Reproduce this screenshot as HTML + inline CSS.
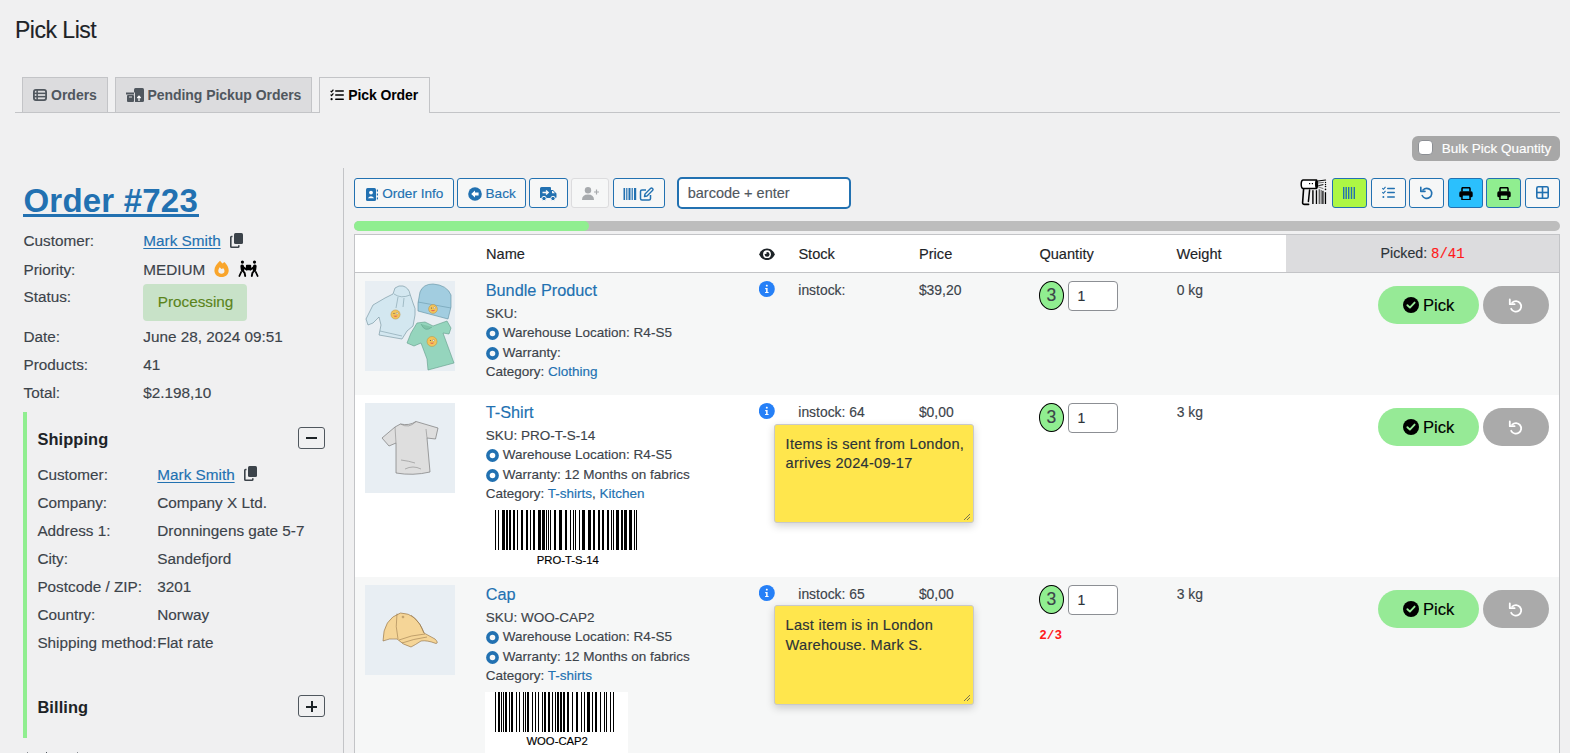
<!DOCTYPE html>
<html><head><meta charset="utf-8"><style>
html,body{margin:0;padding:0;}
body{width:1570px;height:753px;overflow:hidden;background:#f0f0f1;position:relative;font-family:"Liberation Sans",sans-serif;}
.t{position:absolute;line-height:1;white-space:nowrap;-webkit-text-stroke:0.15px currentColor;}
.r{position:absolute;}
</style></head><body>
<div class="t" style="left:15px;top:18.53px;font-size:23px;color:#1d2327;font-weight:400;font-family:'Liberation Sans',sans-serif;letter-spacing:-0.5px">Pick List</div><div class="r" style="left:15px;top:112px;width:1545px;height:1px;background:#c3c4c7"></div><div class="r" style="left:22px;top:77px;width:86px;height:35px;background:#dcdcde;border:1px solid #c3c4c7;border-bottom:none;box-sizing:border-box"></div><div class="r" style="left:115px;top:77px;width:197px;height:35px;background:#dcdcde;border:1px solid #c3c4c7;border-bottom:none;box-sizing:border-box"></div><div class="r" style="left:319px;top:77px;width:111px;height:36px;background:#f0f0f1;border:1px solid #c3c4c7;border-bottom:none;box-sizing:border-box"></div><div class="t" style="left:51px;top:88.15px;font-size:14px;color:#50575e;font-weight:700;font-family:'Liberation Sans',sans-serif;-webkit-text-stroke:0;">Orders</div><div class="t" style="left:147.5px;top:88.15px;font-size:14px;color:#50575e;font-weight:700;font-family:'Liberation Sans',sans-serif;-webkit-text-stroke:0;letter-spacing:-0.05px">Pending Pickup Orders</div><div class="t" style="left:348.3px;top:88.15px;font-size:14px;color:#000;font-weight:700;font-family:'Liberation Sans',sans-serif;-webkit-text-stroke:0;letter-spacing:-0.1px">Pick Order</div><svg class="r" style="left:33px;top:89px;" width="14" height="12" viewBox="0 0 14 12"><rect x="0.9" y="0.9" width="12.2" height="10.2" rx="2" fill="none" stroke="#50575e" stroke-width="1.8"/><rect x="1" y="3.6" width="12" height="1.5" fill="#50575e"/><rect x="1" y="6.9" width="12" height="1.5" fill="#50575e"/><rect x="3.4" y="1" width="1.5" height="10" fill="#50575e"/></svg><svg class="r" style="left:125.5px;top:88px;" width="18" height="14" viewBox="0 0 18 14"><rect x="8" y="0" width="10" height="14" rx="1.5" fill="#50575e"/><rect x="0" y="4.5" width="9" height="2" fill="#50575e"/><rect x="1" y="7" width="7" height="7" rx="1" fill="#50575e"/><rect x="3" y="8.5" width="3" height="1" fill="#dcdcde"/><path d="M13 13 V8.5 M11.3 10 L13 8.2 L14.7 10" stroke="#fff" stroke-width="1.2" fill="none"/><rect x="8" y="4.5" width="1" height="9.5" fill="#dcdcde"/></svg><svg class="r" style="left:330px;top:89px;" width="14" height="12" viewBox="0 0 14 12"><path d="M0.6 1.8 L1.6 2.8 L3.4 0.6 M0.6 5.6 L1.6 6.6 L3.4 4.4" stroke="#000" stroke-width="1.2" fill="none"/><circle cx="1.6" cy="10.2" r="1.1" fill="#000"/><rect x="5" y="1.2" width="9" height="1.6" rx="0.8" fill="#000"/><rect x="5" y="5.2" width="9" height="1.6" rx="0.8" fill="#000"/><rect x="5" y="9.4" width="9" height="1.6" rx="0.8" fill="#000"/></svg><div class="t" style="left:23.5px;top:184.07px;font-size:33px;color:#2271b1;font-weight:700;font-family:'Liberation Sans',sans-serif;-webkit-text-stroke:0;letter-spacing:0.2px">Order #723</div><div class="r" style="left:23px;top:214px;width:176px;height:3px;background:#2271b1"></div><div class="t" style="left:23.5px;top:233.25px;font-size:15.3px;color:#3c434a;font-weight:400;font-family:'Liberation Sans',sans-serif;">Customer:</div><div class="t" style="left:23.5px;top:261.75px;font-size:15.3px;color:#3c434a;font-weight:400;font-family:'Liberation Sans',sans-serif;">Priority:</div><div class="t" style="left:23.5px;top:289.05px;font-size:15.3px;color:#3c434a;font-weight:400;font-family:'Liberation Sans',sans-serif;">Status:</div><div class="t" style="left:23.5px;top:328.85px;font-size:15.3px;color:#3c434a;font-weight:400;font-family:'Liberation Sans',sans-serif;">Date:</div><div class="t" style="left:23.5px;top:357.35px;font-size:15.3px;color:#3c434a;font-weight:400;font-family:'Liberation Sans',sans-serif;">Products:</div><div class="t" style="left:23.5px;top:384.55px;font-size:15.3px;color:#3c434a;font-weight:400;font-family:'Liberation Sans',sans-serif;">Total:</div><div class="t" style="left:143.3px;top:233.25px;font-size:15.3px;color:#2271b1;font-weight:400;font-family:'Liberation Sans',sans-serif;"><span style="text-decoration:underline;text-underline-offset:2px">Mark Smith</span></div><div class="t" style="left:143.3px;top:261.75px;font-size:15.3px;color:#3c434a;font-weight:400;font-family:'Liberation Sans',sans-serif;">MEDIUM</div><div class="t" style="left:143.3px;top:328.85px;font-size:15.3px;color:#3c434a;font-weight:400;font-family:'Liberation Sans',sans-serif;">June 28, 2024 09:51</div><div class="t" style="left:143.3px;top:357.35px;font-size:15.3px;color:#3c434a;font-weight:400;font-family:'Liberation Sans',sans-serif;">41</div><div class="t" style="left:143.3px;top:384.55px;font-size:15.3px;color:#3c434a;font-weight:400;font-family:'Liberation Sans',sans-serif;">$2.198,10</div><div class="r" style="left:143px;top:284px;width:104px;height:37px;background:#c8e2c8;border-radius:4px"></div><div class="t" style="left:157.7px;top:294.05px;font-size:15.3px;color:#5b841b;font-weight:400;font-family:'Liberation Sans',sans-serif;">Processing</div><svg class="r" style="left:229.5px;top:233px;" width="13" height="15" viewBox="0 0 13 15"><rect x="4" y="0" width="9" height="11" rx="1.5" fill="#3c434a"/><path d="M2.5 3.5 H1.6 Q0.8 3.5 0.8 4.3 V13.5 Q0.8 14.2 1.6 14.2 H8 Q8.8 14.2 8.8 13.4 V12.3" stroke="#3c434a" stroke-width="1.6" fill="none"/></svg><svg class="r" style="left:214px;top:260px;" width="15" height="17" viewBox="0 0 15 17"><path d="M6 0.7 L8.4 3.5 L10.4 2 C13 4.5 14.7 7.5 14.7 10.5 C14.7 14.3 11.8 17 7.5 17 C3.3 17 0.4 14.3 0.4 10.5 C0.4 6.5 3 3.5 6 0.7 Z" fill="#f9a52b"/><path d="M5.8 7.3 L7.4 9 L9.3 8.2 C10 9 10.5 10 10.5 11 C10.5 12.8 9.2 13.8 7.5 13.8 C5.8 13.8 4.3 12.8 4.3 11 C4.3 9.5 5 8.3 5.8 7.3 Z" fill="#f0f0f1"/></svg><svg class="r" style="left:238px;top:259.5px;" width="21" height="17" viewBox="0 0 21 17"><circle cx="4.4" cy="2.1" r="1.6" fill="#000"/><circle cx="16.5" cy="2.1" r="1.6" fill="#000"/><rect x="7.9" y="4.7" width="5.3" height="5.5" rx="1" fill="#000"/><g stroke="#000" stroke-linecap="round" fill="none"><path d="M4.2 6.2 L4.6 9.6" stroke-width="3.6"/><path d="M5 7 L8.5 9.6" stroke-width="1.9"/><path d="M3.2 12 L1.4 16" stroke-width="1.8"/><path d="M4.5 10.5 L6.6 13 L7.2 16" stroke-width="1.9"/><path d="M16.8 6.2 L16.4 9.6" stroke-width="3.6"/><path d="M16 7 L12.5 9.6" stroke-width="1.9"/><path d="M17.8 12 L19.6 16" stroke-width="1.8"/><path d="M16.5 10.5 L14.4 13 L13.8 16" stroke-width="1.9"/></g></svg><div class="r" style="left:23px;top:412px;width:4px;height:326px;background:#90ee90"></div><div class="t" style="left:37.4px;top:431.32px;font-size:16.4px;color:#1d2327;font-weight:700;font-family:'Liberation Sans',sans-serif;-webkit-text-stroke:0;letter-spacing:0.1px">Shipping</div><div class="r" style="left:298px;top:427px;width:27px;height:22px;border:1px solid #50575e;border-radius:3px;box-sizing:border-box;background:#f0f0f1"></div><div class="r" style="left:306.3px;top:437.3px;width:10.5px;height:2px;background:#1d2327"></div><div class="t" style="left:37.4px;top:466.55px;font-size:15.3px;color:#3c434a;font-weight:400;font-family:'Liberation Sans',sans-serif;">Customer:</div><div class="t" style="left:37.4px;top:494.55px;font-size:15.3px;color:#3c434a;font-weight:400;font-family:'Liberation Sans',sans-serif;">Company:</div><div class="t" style="left:37.4px;top:522.75px;font-size:15.3px;color:#3c434a;font-weight:400;font-family:'Liberation Sans',sans-serif;">Address 1:</div><div class="t" style="left:37.4px;top:550.75px;font-size:15.3px;color:#3c434a;font-weight:400;font-family:'Liberation Sans',sans-serif;">City:</div><div class="t" style="left:37.4px;top:578.65px;font-size:15.3px;color:#3c434a;font-weight:400;font-family:'Liberation Sans',sans-serif;">Postcode / ZIP:</div><div class="t" style="left:37.4px;top:606.65px;font-size:15.3px;color:#3c434a;font-weight:400;font-family:'Liberation Sans',sans-serif;">Country:</div><div class="t" style="left:37.4px;top:634.65px;font-size:15.3px;color:#3c434a;font-weight:400;font-family:'Liberation Sans',sans-serif;">Shipping method:</div><div class="t" style="left:157.3px;top:466.55px;font-size:15.3px;color:#2271b1;font-weight:400;font-family:'Liberation Sans',sans-serif;"><span style="text-decoration:underline;text-underline-offset:2px">Mark Smith</span></div><svg class="r" style="left:243.5px;top:466px;" width="13" height="15" viewBox="0 0 13 15"><rect x="4" y="0" width="9" height="11" rx="1.5" fill="#3c434a"/><path d="M2.5 3.5 H1.6 Q0.8 3.5 0.8 4.3 V13.5 Q0.8 14.2 1.6 14.2 H8 Q8.8 14.2 8.8 13.4 V12.3" stroke="#3c434a" stroke-width="1.6" fill="none"/></svg><div class="t" style="left:157.3px;top:494.55px;font-size:15.3px;color:#3c434a;font-weight:400;font-family:'Liberation Sans',sans-serif;">Company X Ltd.</div><div class="t" style="left:157.3px;top:522.75px;font-size:15.3px;color:#3c434a;font-weight:400;font-family:'Liberation Sans',sans-serif;">Dronningens gate 5-7</div><div class="t" style="left:157.3px;top:550.75px;font-size:15.3px;color:#3c434a;font-weight:400;font-family:'Liberation Sans',sans-serif;">Sandefjord</div><div class="t" style="left:157.3px;top:578.65px;font-size:15.3px;color:#3c434a;font-weight:400;font-family:'Liberation Sans',sans-serif;">3201</div><div class="t" style="left:157.3px;top:606.65px;font-size:15.3px;color:#3c434a;font-weight:400;font-family:'Liberation Sans',sans-serif;">Norway</div><div class="t" style="left:157.3px;top:634.65px;font-size:15.3px;color:#3c434a;font-weight:400;font-family:'Liberation Sans',sans-serif;">Flat rate</div><div class="t" style="left:37.4px;top:699.32px;font-size:16.4px;color:#1d2327;font-weight:700;font-family:'Liberation Sans',sans-serif;-webkit-text-stroke:0;letter-spacing:0.1px">Billing</div><div class="r" style="left:298px;top:695px;width:27px;height:22px;border:1px solid #50575e;border-radius:3px;box-sizing:border-box;background:#f0f0f1"></div><div class="r" style="left:306px;top:705.8px;width:11px;height:2px;background:#1d2327"></div><div class="r" style="left:310.5px;top:701.3px;width:2px;height:11px;background:#1d2327"></div><div class="r" style="left:27px;top:752px;width:1px;height:1px;background:#8c8f94"></div><div class="r" style="left:46px;top:752px;width:1px;height:1px;background:#50575e"></div><div class="r" style="left:77px;top:752px;width:1px;height:1px;background:#8c8f94"></div><div class="r" style="left:343px;top:168px;width:1px;height:585px;background:#c3c4c7"></div><div class="r" style="left:1412px;top:136px;width:148px;height:25px;background:#a7a7a7;border-radius:6px"></div><div class="r" style="left:1417.5px;top:140.3px;width:15px;height:15px;background:#fff;border:1px solid #8c8f94;border-radius:4px;box-sizing:border-box"></div><div class="t" style="left:1441.7px;top:141.57px;font-size:13.5px;color:#fff;font-weight:400;font-family:'Liberation Sans',sans-serif;">Bulk Pick Quantity</div><div class="r" style="left:354px;top:178px;width:100px;height:30px;border:1px solid #2271b1;border-radius:3px;box-sizing:border-box;background:#f6f7f7"></div><div class="r" style="left:457px;top:178px;width:69px;height:30px;border:1px solid #2271b1;border-radius:3px;box-sizing:border-box;background:#f6f7f7"></div><div class="r" style="left:529px;top:178px;width:39px;height:30px;border:1px solid #2271b1;border-radius:3px;box-sizing:border-box;background:#f6f7f7"></div><div class="r" style="left:571px;top:178px;width:38px;height:30px;border:1px solid #dcdcde;border-radius:3px;box-sizing:border-box;background:#f6f7f7"></div><div class="r" style="left:613px;top:178px;width:52px;height:30px;border:1px solid #2271b1;border-radius:3px;box-sizing:border-box;background:#f6f7f7"></div><div class="t" style="left:382.2px;top:186.59px;font-size:13.6px;color:#2271b1;font-weight:400;font-family:'Liberation Sans',sans-serif;">Order Info</div><div class="t" style="left:485.5px;top:186.59px;font-size:13.6px;color:#2271b1;font-weight:400;font-family:'Liberation Sans',sans-serif;">Back</div><svg class="r" style="left:366px;top:188px;" width="12" height="13" viewBox="0 0 12 13"><rect x="0" y="0" width="10" height="13" rx="1.5" fill="#2271b1"/><circle cx="5" cy="4.6" r="1.9" fill="#fff"/><path d="M1.8 10.2 Q5 6.2 8.2 10.2 Z" fill="#fff"/><rect x="10.8" y="1.6" width="1.2" height="2" fill="#2271b1"/><rect x="10.8" y="5.5" width="1.2" height="2" fill="#2271b1"/><rect x="10.8" y="9.4" width="1.2" height="2" fill="#2271b1"/></svg><svg class="r" style="left:468px;top:187px;" width="14" height="14" viewBox="0 0 14 14"><circle cx="7" cy="7" r="6.8" fill="#2271b1"/><path d="M3.2 7 L7 3.4 V5.6 H10.6 V8.4 H7 V10.6 Z" fill="#fff"/></svg><svg class="r" style="left:540px;top:187px;" width="17" height="14" viewBox="0 0 17 14"><path d="M0 1.5 Q0 0 1.5 0 H10 Q11 0 11 1 V3 H13 L16.5 6.5 V10 Q16.5 11 15.5 11 H0 Z" fill="#2271b1"/><circle cx="4" cy="11.5" r="2.2" fill="#2271b1" stroke="#f6f7f7" stroke-width="1"/><circle cx="13" cy="11.5" r="2.2" fill="#2271b1" stroke="#f6f7f7" stroke-width="1"/><path d="M12 4 H13 L15 6.2 H12 Z" fill="#f6f7f7"/><path d="M2.5 5.5 H8 M6 3.5 L8.2 5.5 L6 7.5" stroke="#f6f7f7" stroke-width="1.4" fill="none"/></svg><svg class="r" style="left:582px;top:187px;" width="17" height="13" viewBox="0 0 17 13"><circle cx="6" cy="3.2" r="3.2" fill="#a7aaad"/><path d="M0 13 Q0 7.5 6 7.5 Q12 7.5 12 13 Z" fill="#a7aaad"/><path d="M14.5 2.5 V7.5 M12 5 H17" stroke="#a7aaad" stroke-width="1.2"/></svg><svg class="r" style="left:623px;top:187px;" width="31" height="14" viewBox="0 0 31 14"><rect x="0.5" y="1" width="1.6" height="12" fill="#2271b1"/><rect x="3.2" y="1" width="1.2" height="12" fill="#2271b1"/><rect x="5.5" y="1" width="2" height="12" fill="#2271b1"/><rect x="8.6" y="1" width="1.2" height="12" fill="#2271b1"/><rect x="11" y="1" width="2.2" height="12" fill="#2271b1"/><path d="M23 3 H19 Q17.5 3 17.5 4.5 V11.5 Q17.5 13 19 13 H26 Q27.5 13 27.5 11.5 V8" stroke="#2271b1" stroke-width="1.5" fill="none"/><path d="M21.5 9.5 L22 7 L27.5 1.5 Q28.5 0.5 29.5 1.5 Q30.5 2.5 29.5 3.5 L24 9 Z" stroke="#2271b1" stroke-width="1.4" fill="none" stroke-linejoin="round"/></svg><div class="r" style="left:677px;top:177px;width:174px;height:31.5px;background:#fff;border:2px solid #2271b1;border-radius:5px;box-sizing:border-box"></div><div class="t" style="left:687.7px;top:185.53px;font-size:14.5px;color:#50575e;font-weight:400;font-family:'Liberation Sans',sans-serif;">barcode + enter</div><svg class="r" style="left:1295px;top:175px;" width="35" height="35" viewBox="0 0 35 35"><g fill="none" stroke="#000" stroke-linecap="round" stroke-linejoin="round"><path d="M8.3 5 H21.6 V13.6 H8.3 Q6.2 13.6 6.2 9.3 Q6.2 5 8.3 5 Z" stroke-width="1.5" fill="#fff"/><ellipse cx="21.6" cy="9.3" rx="1" ry="3.6" stroke-width="1.2"/><path d="M8.6 13.8 L7.6 27.6 Q7.5 29.4 9.6 29.4 H13.6" stroke-width="1.6"/><path d="M14.6 15 L13.4 26.5" stroke-width="1.5"/><path d="M23 6 L30.6 5" stroke-width="1.1"/><path d="M23 8 L28.5 7.4" stroke-width="0.8" stroke="#555"/><path d="M23.5 10.8 L28 9.6" stroke-width="1.1" stroke="#333"/><path d="M23.5 12 L28 13.5" stroke-width="0.8" stroke="#555"/></g><rect x="14" y="8" width="1.2" height="1.2" fill="#000"/><rect x="16.8" y="8" width="1.2" height="1.2" fill="#000"/><circle cx="30.5" cy="7.4" r="0.7" fill="#000"/><circle cx="30.5" cy="9.5" r="0.7" fill="#000"/><circle cx="30.5" cy="11.5" r="0.8" fill="#000"/><circle cx="30.5" cy="14.4" r="0.8" fill="#000"/><rect x="17.2" y="15.2" width="1.4" height="13.8" fill="#000"/><rect x="20.8" y="15.2" width="1.3" height="13.8" fill="#000"/><rect x="23.6" y="14.2" width="1.6" height="14.8" fill="#666"/><rect x="25.8" y="15" width="0.8" height="14" fill="#444"/><rect x="27.2" y="15.8" width="1.4" height="13.2" fill="#222"/><rect x="29.8" y="17.2" width="1.3" height="11.8" fill="#000"/></svg><div class="r" style="left:1332.3px;top:178px;width:34.5px;height:30px;border:1px solid #2271b1;border-radius:3px;box-sizing:border-box;background:#adf744"></div><div class="r" style="left:1371.1px;top:178px;width:34.5px;height:30px;border:1px solid #2271b1;border-radius:3px;box-sizing:border-box;background:#f6f7f7"></div><div class="r" style="left:1409.1px;top:178px;width:34.5px;height:30px;border:1px solid #2271b1;border-radius:3px;box-sizing:border-box;background:#f6f7f7"></div><div class="r" style="left:1448.2px;top:178px;width:34.5px;height:30px;border:1px solid #2271b1;border-radius:3px;box-sizing:border-box;background:#2bc0fd"></div><div class="r" style="left:1486.2px;top:178px;width:34.5px;height:30px;border:1px solid #2271b1;border-radius:3px;box-sizing:border-box;background:#90ee90"></div><div class="r" style="left:1525px;top:178px;width:34.5px;height:30px;border:1px solid #2271b1;border-radius:3px;box-sizing:border-box;background:#f6f7f7"></div><svg class="r" style="left:1343px;top:186px;" width="13" height="14" viewBox="0 0 13 14"><rect x="0" y="1" width="1.4" height="12" fill="#2271b1"/><rect x="2.5" y="1" width="1.4" height="12" fill="#2271b1"/><rect x="5" y="1" width="1.4" height="12" fill="#2271b1"/><rect x="7.8" y="1" width="1.4" height="12" fill="#2271b1"/><rect x="10.6" y="1" width="1.4" height="12" fill="#2271b1"/></svg><svg class="r" style="left:1382px;top:186px;" width="13" height="14" viewBox="0 0 13 14"><path d="M0.3 2.2 L1.5 3.3 L3.5 0.8 M0.3 6.2 L1.5 7.3 L3.5 4.8" stroke="#2271b1" stroke-width="1.1" fill="none"/><circle cx="1.4" cy="11" r="1" fill="#2271b1"/><rect x="5" y="1.7" width="8" height="1.5" rx="0.7" fill="#2271b1"/><rect x="5" y="5.8" width="8" height="1.5" rx="0.7" fill="#2271b1"/><rect x="5" y="10.2" width="8" height="1.5" rx="0.7" fill="#2271b1"/></svg><svg class="r" style="left:1420px;top:186px;" width="13" height="14" viewBox="0 0 13 14"><path d="M3 4 A5 5 0 1 1 2.2 9.5" stroke="#2271b1" stroke-width="1.6" fill="none" stroke-linecap="round"/><path d="M0.8 1.2 V5.4 H5" stroke="#2271b1" stroke-width="1.6" fill="none" stroke-linecap="round" stroke-linejoin="round"/></svg><svg class="r" style="left:1459px;top:187px;" width="14" height="13" viewBox="0 0 14 13"><path d="M3 4.5 V1.8 Q3 0.6 4.2 0.6 H9.8 Q11 0.6 11 1.8 V4.5" stroke="#000" stroke-width="1.6" fill="none"/><rect x="0.3" y="4.3" width="13.4" height="6" rx="1.6" fill="#000"/><rect x="3" y="8" width="8" height="4.5" fill="none" stroke="#000" stroke-width="1.6"/><rect x="3.8" y="8.6" width="6.4" height="3.2" fill="#2bc0fd"/></svg><svg class="r" style="left:1497px;top:187px;" width="14" height="13" viewBox="0 0 14 13"><path d="M3 4.5 V1.8 Q3 0.6 4.2 0.6 H9.8 Q11 0.6 11 1.8 V4.5" stroke="#000" stroke-width="1.6" fill="none"/><rect x="0.3" y="4.3" width="13.4" height="6" rx="1.6" fill="#000"/><rect x="3" y="8" width="8" height="4.5" fill="none" stroke="#000" stroke-width="1.6"/><rect x="3.8" y="8.6" width="6.4" height="3.2" fill="#90ee90"/></svg><svg class="r" style="left:1536px;top:186px;" width="13" height="13" viewBox="0 0 13 13"><rect x="0.8" y="0.8" width="11.4" height="11.4" rx="1.5" fill="none" stroke="#2271b1" stroke-width="1.6"/><rect x="0.8" y="5.7" width="11.4" height="1.6" fill="#2271b1"/><rect x="5.7" y="0.8" width="1.6" height="11.4" fill="#2271b1"/></svg><div class="r" style="left:354px;top:221px;width:1206px;height:10px;background:#bdbdbd;border-radius:5px"></div><div class="r" style="left:354px;top:221px;width:235px;height:10px;background:#90ee90;border-radius:5px"></div><div class="r" style="left:354px;top:234px;width:1206px;height:519px;border:1px solid #c3c4c7;border-bottom:none;box-sizing:border-box;background:#fff"></div><div class="r" style="left:355px;top:235px;width:1204px;height:37px;background:#fff"></div><div class="r" style="left:1286px;top:235px;width:273px;height:37px;background:#dcdcde"></div><div class="r" style="left:355px;top:272px;width:1204px;height:1px;background:#c3c4c7"></div><div class="t" style="left:486px;top:247.04px;font-size:14.6px;color:#1d2327;font-weight:400;font-family:'Liberation Sans',sans-serif;">Name</div><div class="t" style="left:798.4px;top:247.04px;font-size:14.6px;color:#1d2327;font-weight:400;font-family:'Liberation Sans',sans-serif;">Stock</div><div class="t" style="left:919px;top:247.04px;font-size:14.6px;color:#1d2327;font-weight:400;font-family:'Liberation Sans',sans-serif;">Price</div><div class="t" style="left:1039.4px;top:247.04px;font-size:14.6px;color:#1d2327;font-weight:400;font-family:'Liberation Sans',sans-serif;">Quantity</div><div class="t" style="left:1176.4px;top:247.04px;font-size:14.6px;color:#1d2327;font-weight:400;font-family:'Liberation Sans',sans-serif;">Weight</div><div class="t" style="left:1380.6px;top:245.78px;font-size:14.2px;color:#2c3338;font-weight:400;font-family:'Liberation Sans',sans-serif;">Picked: <span style="color:#ff1a1a;font-family:'Liberation Mono',monospace;font-size:14px">8/41</span></div><svg class="r" style="left:758.5px;top:247.9px;" width="16" height="13" viewBox="0 0 16 13"><path d="M8 0.4 C12 0.4 15 3.5 15.7 6.2 C15 8.9 12 12.1 8 12.1 C4 12.1 1 8.9 0.3 6.2 C1 3.5 4 0.4 8 0.4 Z" fill="#1d2327"/><circle cx="8" cy="6.2" r="3.9" fill="#fff"/><circle cx="8.1" cy="6.4" r="2.4" fill="#1d2327"/><circle cx="6.6" cy="5" r="1.1" fill="#fff"/></svg><div class="r" style="left:355px;top:273px;width:1204px;height:122px;background:#f6f7f7"></div><div class="r" style="left:355px;top:395px;width:1204px;height:182px;background:#fff"></div><div class="r" style="left:355px;top:577px;width:1204px;height:176px;background:#f6f7f7"></div><svg class="r" style="left:365px;top:281px;" width="90" height="90" viewBox="0 0 90 90"><rect width="90" height="90" fill="#e8eef3"/><path d="M20 17 L28 13 L30 7 Q34 4 38 5 Q44 7 45 13 L48 22 Q51 27 50 34 L48 45 L42 50 L37 58 L14 54 L16 44 L14 36 L8 42 L3 44 L1 38 L8 24 Z" fill="#d3e7f0" stroke="#6f8e9a" stroke-width="0.6" stroke-linejoin="round"/><path d="M29 13 Q36 18 45 14 M33 16 L31 27 M39 17 L38 26 M15 50 L37 55" fill="none" stroke="#6f8e9a" stroke-width="0.5"/><circle cx="30.5" cy="33.5" r="4.6" fill="#f2c45a" stroke="#b08030" stroke-width="0.4"/><circle cx="29.0" cy="32.5" r="0.6" fill="#555"/><circle cx="32.1" cy="32.3" r="0.9" fill="#fff" stroke="#555" stroke-width="0.3"/><path d="M28.3 34.7 Q30.5 37.0 32.7 34.7" fill="#e25050"/><path d="M55 11 Q58 3 68 3 Q82 4 86 14 L86 26 L83 38 L53 30 L53 22 Z" fill="#a2cde0" stroke="#5f8ea0" stroke-width="0.6" stroke-linejoin="round"/><path d="M53 21 L86 27" fill="none" stroke="#5f8ea0" stroke-width="0.5"/><circle cx="68" cy="28" r="4.4" fill="#f2c45a" stroke="#b08030" stroke-width="0.4"/><circle cx="66.5" cy="27" r="0.6" fill="#555"/><circle cx="69.6" cy="26.8" r="0.9" fill="#fff" stroke="#555" stroke-width="0.3"/><path d="M65.8 29.2 Q68 31.5 70.2 29.2" fill="#e25050"/><path d="M52 42 L60 41 L68 45 L82 40 L86 47 L84 53 L78 52 L89 82 L63 89 L62 78 L56 62 L49 65 L42 62 L46 52 Z" fill="#95d5bd" stroke="#5f9a88" stroke-width="0.6" stroke-linejoin="round"/><path d="M56 43 Q60 52 67 46" fill="#7fc4a8" stroke="#5f9a88" stroke-width="0.5"/><circle cx="67" cy="60.5" r="5" fill="#f2c45a" stroke="#b08030" stroke-width="0.4"/><circle cx="65.5" cy="59.5" r="0.6" fill="#555"/><circle cx="68.6" cy="59.3" r="0.9" fill="#fff" stroke="#555" stroke-width="0.3"/><path d="M64.8 61.7 Q67 64.0 69.2 61.7" fill="#e25050"/></svg><div class="t" style="left:485.7px;top:282.10px;font-size:16.3px;color:#2271b1;font-weight:400;font-family:'Liberation Sans',sans-serif;">Bundle Product</div><div class="t" style="left:485.7px;top:306.87px;font-size:13.5px;color:#3c434a;font-weight:400;font-family:'Liberation Sans',sans-serif;">SKU:</div><svg class="r" style="left:485.7px;top:326.5px;" width="13" height="13" viewBox="0 0 13 13"><circle cx="6.5" cy="6.5" r="4.6" fill="none" stroke="#2271b1" stroke-width="3.6"/></svg><div class="t" style="left:502.8px;top:326.37px;font-size:13.5px;color:#3c434a;font-weight:400;font-family:'Liberation Sans',sans-serif;">Warehouse Location: R4-S5</div><svg class="r" style="left:485.7px;top:346.5px;" width="13" height="13" viewBox="0 0 13 13"><circle cx="6.5" cy="6.5" r="4.6" fill="none" stroke="#2271b1" stroke-width="3.6"/></svg><div class="t" style="left:502.8px;top:346.07px;font-size:13.5px;color:#3c434a;font-weight:400;font-family:'Liberation Sans',sans-serif;">Warranty:</div><div class="t" style="left:485.7px;top:365.07px;font-size:13.5px;color:#3c434a;font-weight:400;font-family:'Liberation Sans',sans-serif;">Category: <span style="color:#2271b1">Clothing</span></div><svg class="r" style="left:758.7px;top:281px;" width="16" height="16" viewBox="0 0 16 16"><circle cx="7.8" cy="8" r="8" fill="#2680f7"/><rect x="6.9" y="3.8" width="1.8" height="1.7" rx="0.5" fill="#fff"/><path d="M6.2 7 H8.6 V10.9 H9.6 V12.1 H6.1 V10.9 H7.1 V8.2 H6.2 Z" fill="#fff"/></svg><div class="t" style="left:798.3px;top:283.73px;font-size:13.9px;color:#3c434a;font-weight:400;font-family:'Liberation Sans',sans-serif;">instock:</div><div class="t" style="left:918.9px;top:283.73px;font-size:13.9px;color:#3c434a;font-weight:400;font-family:'Liberation Sans',sans-serif;">$39,20</div><div class="t" style="left:1176.7px;top:283.73px;font-size:13.9px;color:#3c434a;font-weight:400;font-family:'Liberation Sans',sans-serif;">0 kg</div><div class="r" style="left:1039px;top:281px;width:25px;height:29px;background:#90ee90;border:1.2px solid #000;border-radius:50%;box-sizing:border-box"></div><div class="t" style="left:1046.5px;top:287.19px;font-size:17.5px;color:#3c434a;font-weight:400;font-family:'Liberation Sans',sans-serif;">3</div><div class="r" style="left:1068px;top:281px;width:50px;height:30px;background:#fff;border:1px solid #8c8f94;border-radius:4px;box-sizing:border-box"></div><div class="t" style="left:1077.5px;top:289.15px;font-size:14px;color:#2c3338;font-weight:400;font-family:'Liberation Sans',sans-serif;">1</div><div class="r" style="left:1378px;top:286px;width:101px;height:38px;background:#96ea96;border-radius:19px"></div><svg class="r" style="left:1403px;top:297px;" width="16" height="16" viewBox="0 0 16 16"><circle cx="8" cy="8" r="8" fill="#000"/><path d="M4.4 8.2 L6.9 10.6 L11.6 5.6" stroke="#96ea96" stroke-width="1.9" fill="none" stroke-linecap="round" stroke-linejoin="round"/></svg><div class="t" style="left:1423px;top:297.95px;font-size:16.6px;color:#000;font-weight:400;font-family:'Liberation Sans',sans-serif;">Pick</div><div class="r" style="left:1483px;top:286px;width:66px;height:38px;background:#aaaaaa;border-radius:19px"></div><svg class="r" style="left:1508px;top:298px;" width="16" height="16" viewBox="0 0 16 16"><path d="M4.2 4.6 A5.3 5.3 0 1 1 3.2 10.8" stroke="#fff" stroke-width="1.8" fill="none" stroke-linecap="round"/><path d="M1.8 1.4 V6.2 H6.6" stroke="#fff" stroke-width="1.8" fill="none" stroke-linecap="round" stroke-linejoin="round"/></svg><svg class="r" style="left:365px;top:403px;" width="90" height="90" viewBox="0 0 90 90"><rect width="90" height="90" fill="#e8eef3"/><path d="M35.5 21 L30 24 L17 35 L24 43 L31 40 L31 70 Q48 73 65 69 L62 35 L70.5 36 L73 25 L51 18.5 Q44 23 35.5 21 Z" fill="#dedede" stroke="#7a7a7a" stroke-width="0.7" stroke-linejoin="round"/><path d="M35.5 21 Q44 26 51 18.5 M30 24 L31 40 M62 35 L61 26 M36 57 Q44 58 50 60 M40 66 Q48 62 56 66" fill="none" stroke="#8a8a8a" stroke-width="0.6"/></svg><div class="t" style="left:485.7px;top:404.10px;font-size:16.3px;color:#2271b1;font-weight:400;font-family:'Liberation Sans',sans-serif;">T-Shirt</div><div class="t" style="left:485.7px;top:428.87px;font-size:13.5px;color:#3c434a;font-weight:400;font-family:'Liberation Sans',sans-serif;">SKU: PRO-T-S-14</div><svg class="r" style="left:485.7px;top:448.5px;" width="13" height="13" viewBox="0 0 13 13"><circle cx="6.5" cy="6.5" r="4.6" fill="none" stroke="#2271b1" stroke-width="3.6"/></svg><div class="t" style="left:502.8px;top:448.37px;font-size:13.5px;color:#3c434a;font-weight:400;font-family:'Liberation Sans',sans-serif;">Warehouse Location: R4-S5</div><svg class="r" style="left:485.7px;top:468.5px;" width="13" height="13" viewBox="0 0 13 13"><circle cx="6.5" cy="6.5" r="4.6" fill="none" stroke="#2271b1" stroke-width="3.6"/></svg><div class="t" style="left:502.8px;top:468.07px;font-size:13.5px;color:#3c434a;font-weight:400;font-family:'Liberation Sans',sans-serif;">Warranty: 12 Months on fabrics</div><div class="t" style="left:485.7px;top:487.07px;font-size:13.5px;color:#3c434a;font-weight:400;font-family:'Liberation Sans',sans-serif;">Category: <span style="color:#2271b1">T-shirts</span>, <span style="color:#2271b1">Kitchen</span></div><svg class="r" style="left:758.7px;top:403px;" width="16" height="16" viewBox="0 0 16 16"><circle cx="7.8" cy="8" r="8" fill="#2680f7"/><rect x="6.9" y="3.8" width="1.8" height="1.7" rx="0.5" fill="#fff"/><path d="M6.2 7 H8.6 V10.9 H9.6 V12.1 H6.1 V10.9 H7.1 V8.2 H6.2 Z" fill="#fff"/></svg><div class="t" style="left:798.3px;top:405.73px;font-size:13.9px;color:#3c434a;font-weight:400;font-family:'Liberation Sans',sans-serif;">instock: 64</div><div class="t" style="left:918.9px;top:405.73px;font-size:13.9px;color:#3c434a;font-weight:400;font-family:'Liberation Sans',sans-serif;">$0,00</div><div class="t" style="left:1176.7px;top:405.73px;font-size:13.9px;color:#3c434a;font-weight:400;font-family:'Liberation Sans',sans-serif;">3 kg</div><div class="r" style="left:1039px;top:403px;width:25px;height:29px;background:#90ee90;border:1.2px solid #000;border-radius:50%;box-sizing:border-box"></div><div class="t" style="left:1046.5px;top:409.19px;font-size:17.5px;color:#3c434a;font-weight:400;font-family:'Liberation Sans',sans-serif;">3</div><div class="r" style="left:1068px;top:403px;width:50px;height:30px;background:#fff;border:1px solid #8c8f94;border-radius:4px;box-sizing:border-box"></div><div class="t" style="left:1077.5px;top:411.15px;font-size:14px;color:#2c3338;font-weight:400;font-family:'Liberation Sans',sans-serif;">1</div><div class="r" style="left:1378px;top:408px;width:101px;height:38px;background:#96ea96;border-radius:19px"></div><svg class="r" style="left:1403px;top:419px;" width="16" height="16" viewBox="0 0 16 16"><circle cx="8" cy="8" r="8" fill="#000"/><path d="M4.4 8.2 L6.9 10.6 L11.6 5.6" stroke="#96ea96" stroke-width="1.9" fill="none" stroke-linecap="round" stroke-linejoin="round"/></svg><div class="t" style="left:1423px;top:419.95px;font-size:16.6px;color:#000;font-weight:400;font-family:'Liberation Sans',sans-serif;">Pick</div><div class="r" style="left:1483px;top:408px;width:66px;height:38px;background:#aaaaaa;border-radius:19px"></div><svg class="r" style="left:1508px;top:420px;" width="16" height="16" viewBox="0 0 16 16"><path d="M4.2 4.6 A5.3 5.3 0 1 1 3.2 10.8" stroke="#fff" stroke-width="1.8" fill="none" stroke-linecap="round"/><path d="M1.8 1.4 V6.2 H6.6" stroke="#fff" stroke-width="1.8" fill="none" stroke-linecap="round" stroke-linejoin="round"/></svg><div class="r" style="left:774px;top:423.5px;width:200px;height:99.5px;background:#ffe64d;border:1px solid #c9c9c9;border-radius:3px;box-sizing:border-box;box-shadow:0 3px 8px rgba(0,0,0,0.18)"></div><div class="t" style="left:785.6px;top:436.64px;font-size:14.6px;color:#2c3338;font-weight:400;font-family:'Liberation Sans',sans-serif;letter-spacing:0.25px">Items is sent from London,</div><div class="t" style="left:785.6px;top:456.44px;font-size:14.6px;color:#2c3338;font-weight:400;font-family:'Liberation Sans',sans-serif;letter-spacing:0.25px">arrives 2024-09-17</div><svg class="r" style="left:963px;top:512.5px;" width="8" height="8" viewBox="0 0 8 8"><path d="M1 7 L7 1 M4 7 L7 4" stroke="#555" stroke-width="0.8"/></svg><svg class="r" style="left:365px;top:585px;" width="90" height="90" viewBox="0 0 90 90"><rect width="90" height="90" fill="#e8eef3"/><path d="M18 56 Q18 34 35.5 28 Q52 28 59 48 L70 54 Q74 58 71 58.5 Q62 55 56 56 Q50 60 46 62 Q38 60 32 54 Q24 53 18 56 Z" fill="#f5d597" stroke="#8a6a40" stroke-width="0.6" stroke-linejoin="round"/><path d="M32 28.5 Q30 42 33 54 M46 30 Q56 38 59 48 M34 55 Q46 50 60 49 M37 58 Q48 54 62 52" fill="none" stroke="#8a6a40" stroke-width="0.5"/><circle cx="38" cy="32" r="0.9" fill="none" stroke="#8a6a40" stroke-width="0.5"/></svg><div class="t" style="left:485.7px;top:586.10px;font-size:16.3px;color:#2271b1;font-weight:400;font-family:'Liberation Sans',sans-serif;">Cap</div><div class="t" style="left:485.7px;top:610.87px;font-size:13.5px;color:#3c434a;font-weight:400;font-family:'Liberation Sans',sans-serif;">SKU: WOO-CAP2</div><svg class="r" style="left:485.7px;top:630.5px;" width="13" height="13" viewBox="0 0 13 13"><circle cx="6.5" cy="6.5" r="4.6" fill="none" stroke="#2271b1" stroke-width="3.6"/></svg><div class="t" style="left:502.8px;top:630.37px;font-size:13.5px;color:#3c434a;font-weight:400;font-family:'Liberation Sans',sans-serif;">Warehouse Location: R4-S5</div><svg class="r" style="left:485.7px;top:650.5px;" width="13" height="13" viewBox="0 0 13 13"><circle cx="6.5" cy="6.5" r="4.6" fill="none" stroke="#2271b1" stroke-width="3.6"/></svg><div class="t" style="left:502.8px;top:650.07px;font-size:13.5px;color:#3c434a;font-weight:400;font-family:'Liberation Sans',sans-serif;">Warranty: 12 Months on fabrics</div><div class="t" style="left:485.7px;top:669.07px;font-size:13.5px;color:#3c434a;font-weight:400;font-family:'Liberation Sans',sans-serif;">Category: <span style="color:#2271b1">T-shirts</span></div><svg class="r" style="left:758.7px;top:585px;" width="16" height="16" viewBox="0 0 16 16"><circle cx="7.8" cy="8" r="8" fill="#2680f7"/><rect x="6.9" y="3.8" width="1.8" height="1.7" rx="0.5" fill="#fff"/><path d="M6.2 7 H8.6 V10.9 H9.6 V12.1 H6.1 V10.9 H7.1 V8.2 H6.2 Z" fill="#fff"/></svg><div class="t" style="left:798.3px;top:587.73px;font-size:13.9px;color:#3c434a;font-weight:400;font-family:'Liberation Sans',sans-serif;">instock: 65</div><div class="t" style="left:918.9px;top:587.73px;font-size:13.9px;color:#3c434a;font-weight:400;font-family:'Liberation Sans',sans-serif;">$0,00</div><div class="t" style="left:1176.7px;top:587.73px;font-size:13.9px;color:#3c434a;font-weight:400;font-family:'Liberation Sans',sans-serif;">3 kg</div><div class="r" style="left:1039px;top:585px;width:25px;height:29px;background:#90ee90;border:1.2px solid #000;border-radius:50%;box-sizing:border-box"></div><div class="t" style="left:1046.5px;top:591.19px;font-size:17.5px;color:#3c434a;font-weight:400;font-family:'Liberation Sans',sans-serif;">3</div><div class="r" style="left:1068px;top:585px;width:50px;height:30px;background:#fff;border:1px solid #8c8f94;border-radius:4px;box-sizing:border-box"></div><div class="t" style="left:1077.5px;top:593.15px;font-size:14px;color:#2c3338;font-weight:400;font-family:'Liberation Sans',sans-serif;">1</div><div class="t" style="left:1039.3px;top:630.33px;font-size:12.6px;color:#ff1a1a;font-weight:700;font-family:'Liberation Mono',sans-serif;-webkit-text-stroke:0;">2/3</div><div class="r" style="left:1378px;top:590px;width:101px;height:38px;background:#96ea96;border-radius:19px"></div><svg class="r" style="left:1403px;top:601px;" width="16" height="16" viewBox="0 0 16 16"><circle cx="8" cy="8" r="8" fill="#000"/><path d="M4.4 8.2 L6.9 10.6 L11.6 5.6" stroke="#96ea96" stroke-width="1.9" fill="none" stroke-linecap="round" stroke-linejoin="round"/></svg><div class="t" style="left:1423px;top:601.95px;font-size:16.6px;color:#000;font-weight:400;font-family:'Liberation Sans',sans-serif;">Pick</div><div class="r" style="left:1483px;top:590px;width:66px;height:38px;background:#aaaaaa;border-radius:19px"></div><svg class="r" style="left:1508px;top:602px;" width="16" height="16" viewBox="0 0 16 16"><path d="M4.2 4.6 A5.3 5.3 0 1 1 3.2 10.8" stroke="#fff" stroke-width="1.8" fill="none" stroke-linecap="round"/><path d="M1.8 1.4 V6.2 H6.6" stroke="#fff" stroke-width="1.8" fill="none" stroke-linecap="round" stroke-linejoin="round"/></svg><div class="r" style="left:774px;top:605.2px;width:200px;height:99.5px;background:#ffe64d;border:1px solid #c9c9c9;border-radius:3px;box-sizing:border-box;box-shadow:0 3px 8px rgba(0,0,0,0.18)"></div><div class="t" style="left:785.6px;top:618.34px;font-size:14.6px;color:#2c3338;font-weight:400;font-family:'Liberation Sans',sans-serif;letter-spacing:0.25px">Last item is in London</div><div class="t" style="left:785.6px;top:638.14px;font-size:14.6px;color:#2c3338;font-weight:400;font-family:'Liberation Sans',sans-serif;letter-spacing:0.25px">Warehouse. Mark S.</div><svg class="r" style="left:963px;top:694.2px;" width="8" height="8" viewBox="0 0 8 8"><path d="M1 7 L7 1 M4 7 L7 4" stroke="#555" stroke-width="0.8"/></svg><svg class="r" style="left:495px;top:510px;shape-rendering:crispEdges" width="145" height="40" viewBox="0 0 145 40"><rect x="0" y="0" width="1" height="40" fill="#000"/><rect x="3" y="0" width="1" height="40" fill="#000"/><rect x="7" y="0" width="3" height="40" fill="#000"/><rect x="11" y="0" width="2" height="40" fill="#000"/><rect x="14" y="0" width="2" height="40" fill="#000"/><rect x="18" y="0" width="2" height="40" fill="#000"/><rect x="22" y="0" width="1" height="40" fill="#000"/><rect x="26" y="0" width="2" height="40" fill="#000"/><rect x="31" y="0" width="2" height="40" fill="#000"/><rect x="35" y="0" width="1" height="40" fill="#000"/><rect x="38" y="0" width="2" height="40" fill="#000"/><rect x="43" y="0" width="3" height="40" fill="#000"/><rect x="47" y="0" width="3" height="40" fill="#000"/><rect x="51" y="0" width="1" height="40" fill="#000"/><rect x="53" y="0" width="1" height="40" fill="#000"/><rect x="55" y="0" width="1" height="40" fill="#000"/><rect x="59" y="0" width="2" height="40" fill="#000"/><rect x="64" y="0" width="3" height="40" fill="#000"/><rect x="70" y="0" width="2" height="40" fill="#000"/><rect x="75" y="0" width="1" height="40" fill="#000"/><rect x="78" y="0" width="1" height="40" fill="#000"/><rect x="80" y="0" width="1" height="40" fill="#000"/><rect x="84" y="0" width="1" height="40" fill="#000"/><rect x="87" y="0" width="3" height="40" fill="#000"/><rect x="93" y="0" width="3" height="40" fill="#000"/><rect x="98" y="0" width="2" height="40" fill="#000"/><rect x="103" y="0" width="2" height="40" fill="#000"/><rect x="107" y="0" width="2" height="40" fill="#000"/><rect x="112" y="0" width="2" height="40" fill="#000"/><rect x="116" y="0" width="1" height="40" fill="#000"/><rect x="118" y="0" width="1" height="40" fill="#000"/><rect x="121" y="0" width="3" height="40" fill="#000"/><rect x="126" y="0" width="2" height="40" fill="#000"/><rect x="129" y="0" width="3" height="40" fill="#000"/><rect x="134" y="0" width="3" height="40" fill="#000"/><rect x="139" y="0" width="1" height="40" fill="#000"/><rect x="141" y="0" width="1" height="40" fill="#000"/></svg><div class="t" style="left:536.7px;top:554.73px;font-size:11.3px;color:#000;font-weight:400;font-family:'Liberation Sans',sans-serif;">PRO-T-S-14</div><div class="r" style="left:485px;top:691.5px;width:143px;height:62px;background:#fff"></div><svg class="r" style="left:495px;top:692px;shape-rendering:crispEdges" width="123" height="40" viewBox="0 0 123 40"><rect x="0" y="0" width="1" height="40" fill="#000"/><rect x="3" y="0" width="2" height="40" fill="#000"/><rect x="6" y="0" width="1" height="40" fill="#000"/><rect x="8" y="0" width="1" height="40" fill="#000"/><rect x="10" y="0" width="2" height="40" fill="#000"/><rect x="14" y="0" width="1" height="40" fill="#000"/><rect x="16" y="0" width="2" height="40" fill="#000"/><rect x="21" y="0" width="1" height="40" fill="#000"/><rect x="24" y="0" width="1" height="40" fill="#000"/><rect x="28" y="0" width="1" height="40" fill="#000"/><rect x="30" y="0" width="1" height="40" fill="#000"/><rect x="32" y="0" width="2" height="40" fill="#000"/><rect x="37" y="0" width="1" height="40" fill="#000"/><rect x="40" y="0" width="1" height="40" fill="#000"/><rect x="43" y="0" width="1" height="40" fill="#000"/><rect x="47" y="0" width="1" height="40" fill="#000"/><rect x="49" y="0" width="2" height="40" fill="#000"/><rect x="53" y="0" width="2" height="40" fill="#000"/><rect x="57" y="0" width="1" height="40" fill="#000"/><rect x="60" y="0" width="1" height="40" fill="#000"/><rect x="62" y="0" width="2" height="40" fill="#000"/><rect x="65" y="0" width="2" height="40" fill="#000"/><rect x="68" y="0" width="2" height="40" fill="#000"/><rect x="72" y="0" width="2" height="40" fill="#000"/><rect x="77" y="0" width="1" height="40" fill="#000"/><rect x="81" y="0" width="2" height="40" fill="#000"/><rect x="86" y="0" width="1" height="40" fill="#000"/><rect x="89" y="0" width="1" height="40" fill="#000"/><rect x="92" y="0" width="3" height="40" fill="#000"/><rect x="97" y="0" width="1" height="40" fill="#000"/><rect x="100" y="0" width="2" height="40" fill="#000"/><rect x="105" y="0" width="1" height="40" fill="#000"/><rect x="109" y="0" width="1" height="40" fill="#000"/><rect x="111" y="0" width="1" height="40" fill="#000"/><rect x="115" y="0" width="1" height="40" fill="#000"/><rect x="118" y="0" width="1" height="40" fill="#000"/></svg><div class="t" style="left:526.4px;top:736.13px;font-size:11.3px;color:#000;font-weight:400;font-family:'Liberation Sans',sans-serif;">WOO-CAP2</div>
</body></html>
